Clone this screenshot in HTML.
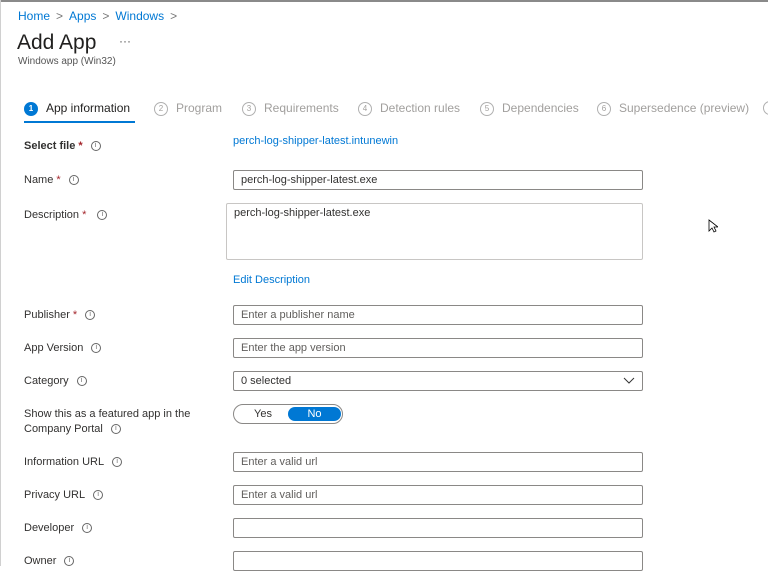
<!DOCTYPE html>
<html><head><style>
*{box-sizing:border-box;margin:0;padding:0}
body{width:768px;height:566px;overflow:hidden;background:#fff;font-family:"Liberation Sans",sans-serif;color:#323130;position:relative}
.a{position:absolute;white-space:nowrap}
.bc{top:9px;left:18px;font-size:12px;color:#0078d4}
.bc span{color:#777;margin:0 6px}
.lbl{left:24px;font-size:11px;color:#323130}
.req{color:#a4262c}
.i{display:inline-block;width:10px;height:10px;border:1px solid #666;border-radius:50%;font-size:7px;line-height:8px;text-align:center;color:#666;vertical-align:middle;margin-left:8px;font-weight:normal}
.in{left:233px;width:410px;height:20px;border:1px solid #8a8886;border-radius:2px;font-size:11px;padding:3px 7px;color:#323130}
.ph{color:#605e5c}
.tab{top:101px;font-size:12px;color:#a19f9d}
.c{display:inline-block;width:14px;height:14px;border:1px solid #b0b0b0;border-radius:50%;font-size:8px;line-height:12px;text-align:center;margin-right:8px;vertical-align:1px}
</style></head><body>
<div class="a" style="left:0;top:0;width:768px;height:2px;background:#8a8a8a"></div>
<div class="a" style="left:0;top:0;width:1px;height:566px;background:#d0d0d0"></div>
<div class="a bc">Home<span>&gt;</span>Apps<span>&gt;</span>Windows<span>&gt;</span></div>
<div class="a" style="top:31px;left:17px;font-size:21px;color:#201f1e">Add App</div>
<div class="a" style="top:34px;left:119px;font-size:12px;color:#555">···</div>
<div class="a" style="top:56px;left:18px;font-size:10px;color:#555">Windows app (Win32)</div>
<div class="a tab" style="left:24px;color:#201f1e"><span class="c" style="background:#0078d4;border-color:#0078d4;color:#fff;font-weight:bold">1</span>App information</div>
<div class="a" style="top:121px;left:24px;width:111px;height:2px;background:#0078d4"></div>
<div class="a tab" style="left:154px"><span class="c">2</span>Program</div>
<div class="a tab" style="left:242px"><span class="c">3</span>Requirements</div>
<div class="a tab" style="left:358px"><span class="c">4</span>Detection rules</div>
<div class="a tab" style="left:480px"><span class="c">5</span>Dependencies</div>
<div class="a tab" style="left:597px"><span class="c">6</span>Supersedence (preview)</div>
<div class="a tab" style="left:763px"><span class="c"></span></div>

<div class="a lbl" style="top:140px;font-weight:bold">Select file <span class="req">*</span><span class="i">i</span></div>
<div class="a" style="top:135px;left:233px;font-size:11px;color:#0078d4">perch-log-shipper-latest.intunewin</div>
<div class="a lbl" style="top:174px">Name <span class="req">*</span><span class="i">i</span></div>
<div class="a in" style="top:170px">perch-log-shipper-latest.exe</div>
<div class="a lbl" style="top:209px">Description <span class="req">*</span> <span class="i">i</span></div>
<div class="a in" style="top:203px;left:226px;width:417px;height:57px;border-color:#c8c6c4">perch-log-shipper-latest.exe</div>
<div class="a" style="top:274px;left:233px;font-size:11px;color:#0078d4">Edit Description</div>
<div class="a lbl" style="top:309px">Publisher <span class="req">*</span><span class="i">i</span></div>
<div class="a in ph" style="top:305px">Enter a publisher name</div>
<div class="a lbl" style="top:342px">App Version<span class="i">i</span></div>
<div class="a in ph" style="top:338px">Enter the app version</div>
<div class="a lbl" style="top:375px">Category<span class="i">i</span></div>
<div class="a in" style="top:371px">0 selected<svg style="position:absolute;right:7px;top:5px" width="12" height="8"><path d="M1 1l5 5 5-5" stroke="#333" fill="none"/></svg></div>
<div class="a lbl" style="top:407px;line-height:15px">Show this as a featured app in the<br>Company Portal<span class="i">i</span></div>
<div class="a" style="top:404px;left:233px;width:110px;height:20px;border:1px solid #8a8886;border-radius:10px;font-size:11px">
<span class="a" style="left:20px;top:3px">Yes</span>
<span class="a" style="left:54px;top:2px;width:53px;height:14px;background:#0078d4;border-radius:7px;color:#fff;text-align:center;line-height:14px">No</span></div>
<div class="a lbl" style="top:456px">Information URL<span class="i">i</span></div>
<div class="a in ph" style="top:452px">Enter a valid url</div>
<div class="a lbl" style="top:489px">Privacy URL<span class="i">i</span></div>
<div class="a in ph" style="top:485px">Enter a valid url</div>
<div class="a lbl" style="top:522px">Developer<span class="i">i</span></div>
<div class="a in" style="top:518px"></div>
<div class="a lbl" style="top:555px">Owner<span class="i">i</span></div>
<div class="a in" style="top:551px"></div>
<svg class="a" style="left:708px;top:219px" width="10" height="14"><path d="M1 1v11l3-3 2 4 2-1-2-4h4z" fill="#fff" stroke="#000" stroke-width="0.8"/></svg>
</body></html>
